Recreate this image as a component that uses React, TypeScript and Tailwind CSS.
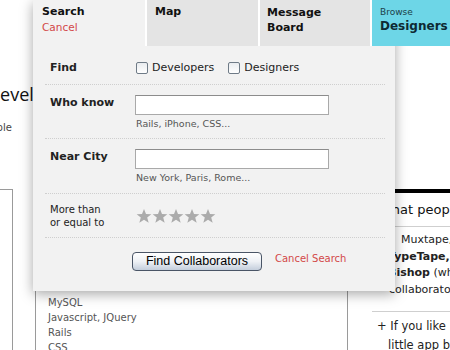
const font = { fontFamily: '"DejaVu Sans", Verdana, sans-serif' };

function Checkbox() {
  return (
    <span className="inline-block w-[12px] h-[12px] border border-[#6f7b87] rounded-[2px] bg-gradient-to-b from-[#e9ecef] to-white" />
  );
}

function TextField() {
  return <div className="w-[194px] h-[20px] border border-[#a9a9a9] border-t-[#8c8c8c] bg-white" />;
}

function Separator() {
  return <div className="border-t border-dotted border-[#cfcfcf]" />;
}

function StarIcon() {
  return (
    <svg width="16" height="16" viewBox="0 0 24 24">
      <polygon
        points="12,1.5 15,9 23,9.3 16.8,14.3 19,22.2 12,17.7 5,22.2 7.2,14.3 1,9.3 9,9"
        fill="#ababab"
      />
    </svg>
  );
}

function Tabs() {
  return (
    <div className="flex h-[46px] w-[417px]">
      <div className="w-[112px] pl-[9px] pt-[5px] bg-[#f2f2f2]">
        <div className="text-[11px] leading-[14px] font-bold text-[#111]">Search</div>
        <div className="text-[10.5px] leading-[16px] text-[#d24848]">Cancel</div>
      </div>
      <div className="w-[113px] border-l-2 border-white bg-[#e4e4e4] pl-[8px] pt-[5px]">
        <div className="text-[11px] leading-[14px] font-bold text-[#111]">Map</div>
      </div>
      <div className="w-[112px] border-l-2 border-white bg-[#e4e4e4] pl-[7px] pt-[5px]">
        <div className="text-[11px] leading-[15px] font-bold text-[#111]">Message</div>
        <div className="text-[11px] leading-[15px] font-bold text-[#111]">Board</div>
      </div>
      <div className="w-[80px] border-l-2 border-white bg-[#6dd6e7] pl-[8px] pt-[6px]">
        <div className="text-[9px] leading-[12px] text-[#1c3f48]">Browse</div>
        <div className="text-[12px] leading-[17px] font-bold text-[#0d2a33]">Designers</div>
      </div>
    </div>
  );
}

function Label({ children }: { children: React.ReactNode }) {
  return (
    <div className="w-[90px] shrink-0 pl-[5px] pt-[1px] text-[11px] leading-[14px] font-bold text-[#222] whitespace-nowrap">
      {children}
    </div>
  );
}

function SearchPanel() {
  return (
    <div className="absolute left-[33px] top-0 w-[362px] bg-[#f2f2f2] shadow-[0_3px_12px_rgba(0,0,0,0.35)]">
      <Tabs />
      <div className="pl-[12px] pr-[10px]">
        <div className="flex items-center pt-[15px] pb-[9px]">
          <div className="w-[90px] shrink-0 pl-[5px] text-[11px] leading-[14px] font-bold text-[#222]">Find</div>
          <label className="flex items-center gap-[4px] ml-[1px] text-[11px] leading-[14px] text-[#222]">
            <Checkbox />
            Developers
          </label>
          <label className="flex items-center gap-[4px] ml-[14px] text-[11px] leading-[14px] text-[#222]">
            <Checkbox />
            Designers
          </label>
        </div>
        <Separator />
        <div className="flex pt-[10px] pb-[8px]">
          <Label>Who know</Label>
          <div>
            <TextField />
            <div className="mt-[3px] pl-[1px] text-[9.5px] leading-[12px] text-[#555]">Rails, iPhone, CSS...</div>
          </div>
        </div>
        <Separator />
        <div className="flex pt-[10px] pb-[9px]">
          <Label>Near City</Label>
          <div>
            <TextField />
            <div className="mt-[3px] pl-[1px] text-[9.5px] leading-[12px] text-[#555]">New York, Paris, Rome...</div>
          </div>
        </div>
        <Separator />
        <div className="flex items-center pt-[9px] pb-[8px]">
          <div className="w-[90px] shrink-0 pl-[5px] text-[10px] leading-[13px] text-[#222]">
            More than
            <br />
            or equal to
          </div>
          <div className="flex ml-[1px]">
            {[0, 1, 2, 3, 4].map((i) => (
              <StarIcon key={i} />
            ))}
          </div>
        </div>
        <Separator />
        <div className="flex items-center pt-[14px] pb-[20px] pl-[87px]">
          <button
            className="w-[130px] h-[19px] rounded-[4px] border border-[#4a5566] bg-gradient-to-b from-white via-[#eef1f5] to-[#c4cedc] text-[12.5px] leading-[17px] text-black"
            style={{ fontFamily: '"Liberation Sans", Arial, sans-serif' }}
          >
            Find Collaborators
          </button>
          <span className="ml-[13px] -mt-[7px] text-[10px] text-[#d24848]">Cancel Search</span>
        </div>
      </div>
    </div>
  );
}

function Background() {
  return (
    <div className="pt-[84px]">
      <div
        className="-ml-[13px] text-[18px] leading-[20px] font-medium text-[#111] whitespace-nowrap"
        style={{ fontFamily: '"Open Sans", sans-serif' }}
      >
        Developers
      </div>
      <div className="mt-[17px] -ml-[22px] text-[10px] leading-[14px] text-[#444] whitespace-nowrap">people</div>
      <div className="flex mt-[54px] w-[450px]">
        <div className="w-[13px] h-[170px] shrink-0 border-t border-r border-[#9a9a9a]" />
        <div className="ml-[22px] w-[313px] h-[170px] shrink-0 border-l border-r border-[#9a9a9a] pl-[12px] pt-[106px] text-[10px] leading-[15px] text-[#555]">
          <div>MySQL</div>
          <div>Javascript, JQuery</div>
          <div>Rails</div>
          <div>CSS</div>
        </div>
        <div className="ml-[24px] w-[78px] shrink-0">
          <div className="h-[4px] bg-black" />
          <div className="pl-[7px] pt-[9px] pb-[8px] text-[13px] leading-[16px] whitespace-nowrap text-[#111] border-b border-[#cfcfcf]">
            What people say
          </div>
          <div className="pt-[5px] pb-[13px] text-[11px] leading-[16.5px] whitespace-nowrap text-[#222] border-b border-[#cfcfcf]">
            <div className="pl-[29px]">Muxtape,</div>
            <div className="pl-[16px] font-bold">TypeTape,</div>
            <div className="pl-[16px]">
              <b>Bishop</b> (who
            </div>
            <div className="pl-[17px]">collaborators</div>
          </div>
          <div className="pl-[5px] pt-[5px] text-[11.5px] leading-[19px] whitespace-nowrap text-[#222]">
            <div>+ If you like</div>
            <div className="pl-[11px]">little app by</div>
          </div>
        </div>
      </div>
    </div>
  );
}

export default function App() {
  return (
    <div className="relative w-[450px] h-[350px] overflow-hidden bg-white" style={font}>
      <Background />
      <SearchPanel />
    </div>
  );
}
